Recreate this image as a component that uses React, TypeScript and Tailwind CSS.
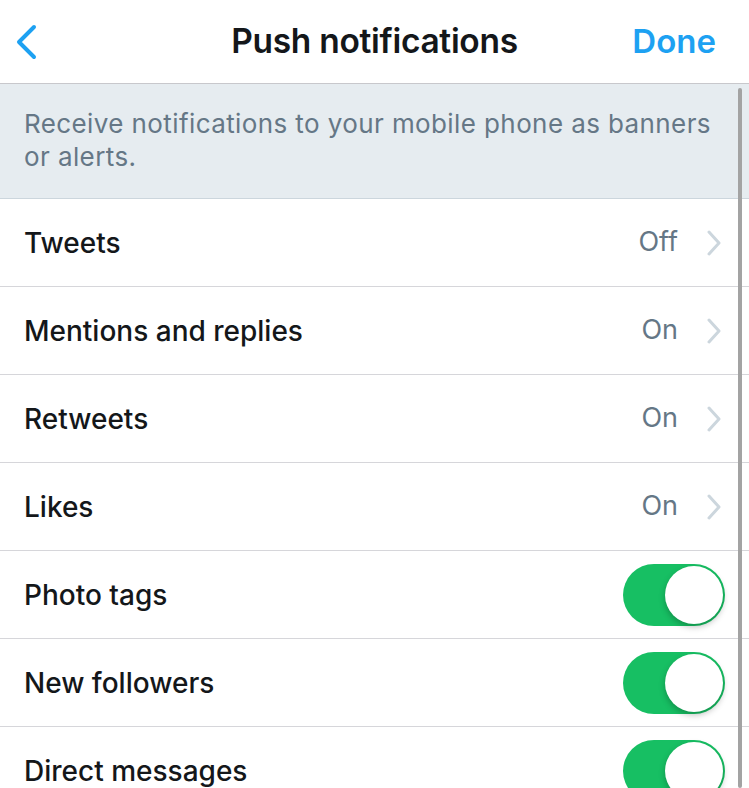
import React from "react";

const Chevron = () => (
  <svg width="16" height="26" viewBox="0 0 16 26" className="ml-[28px]">
    <path d="M3 2 L13 13 L3 24" fill="none" stroke="#ccd6dd" strokeWidth="3" strokeLinecap="round" strokeLinejoin="round" />
  </svg>
);

const Toggle = () => (
  <div className="relative w-[102px] h-[62px] rounded-full bg-[#17bf63]">
    <div className="absolute right-[2px] top-[2px] w-[58px] h-[58px] rounded-full bg-white shadow-[0_3px_6px_rgba(0,0,0,0.25)]" />
  </div>
);

const rows: { label: string; value?: string; toggle?: boolean }[] = [
  { label: "Tweets", value: "Off" },
  { label: "Mentions and replies", value: "On" },
  { label: "Retweets", value: "On" },
  { label: "Likes", value: "On" },
  { label: "Photo tags", toggle: true },
  { label: "New followers", toggle: true },
  { label: "Direct messages", toggle: true },
];

export default function App() {
  return (
    <div
      className="relative w-[749px] h-[788px] overflow-hidden bg-white"
      style={{ fontFamily: "Inter, 'Noto Sans', sans-serif" }}
    >
      <div className="h-[84px] grid grid-cols-[1fr_auto_1fr] items-center border-b border-[#c8c8cc] px-[14px]">
        <svg width="24" height="36" viewBox="0 0 24 36">
          <path d="M20 3 L5 18 L20 33" fill="none" stroke="#1da1f2" strokeWidth="4" strokeLinecap="round" strokeLinejoin="round" />
        </svg>
        <div className="text-[33.5px] font-semibold text-[#14171a] tracking-[-0.3px]">Push notifications</div>
        <div className="justify-self-end text-[33px] font-semibold text-[#1da1f2] pr-[19px]">Done</div>
      </div>
      <div className="h-[115px] bg-[#e6ecf0] border-b border-[#ccd6dd] pl-[24px] pr-[18px] pt-[23px] text-[26px] tracking-[0.4px] leading-[33px] text-[#657786]">
        Receive notifications to your mobile phone as banners or alerts.
      </div>
      {rows.map((r) => (
        <div key={r.label} className="h-[88px] flex items-center justify-between border-b border-[#d6d6da] pl-[24px] pr-[24px]">
          <div className="text-[28px] font-medium text-[#14171a] pt-[1px]">{r.label}</div>
          {r.toggle ? (
            <Toggle />
          ) : (
            <div className="flex items-center pr-[3px]">
              <span className="text-[27px] text-[#657786]">{r.value}</span>
              <Chevron />
            </div>
          )}
        </div>
      ))}
      <div className="absolute left-[738px] top-[88px] w-[4px] h-[700px] rounded-full bg-[#a3a3a3]" />
    </div>
  );
}
